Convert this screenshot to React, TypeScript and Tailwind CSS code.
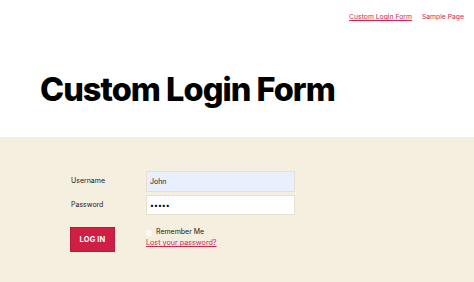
import React from 'react';

const App: React.FC = () => {
    return (
        <div className="w-[474px] h-[282px] overflow-hidden bg-white flex flex-col" style={{ fontFamily: 'Inter, "Liberation Sans", sans-serif' }}>
            <header className="h-[137px] flex flex-col">
                <nav className="flex justify-end gap-[10px] pr-[10px] pt-[12px] text-[6.8px] leading-[9px] text-[#cd2653]">
                    <a href="#" className="underline underline-offset-[1px]">Custom Login Form</a>
                    <a href="#">Sample Page</a>
                </nav>
                <h1 className="mt-[50px] pl-[40px] text-[32.5px] leading-[38px] font-extrabold tracking-[-0.03em] text-black">
                    Custom Login Form
                </h1>
            </header>

            <main className="flex-1 bg-[#f5efe0] pt-[34px] pl-[70px]">
                <form className="flex flex-col">
                    <div className="flex items-center h-[21px]">
                        <label className="w-[76px] pl-[1px] text-[7px] text-[#1a1a1a]">Username</label>
                        <input
                            type="text"
                            defaultValue="John"
                            className="w-[149px] h-[21px] bg-[#e8f0fe] border border-[#e6e0d2] px-[3px] text-[7px] text-[#1a1a1a] outline-none"
                        />
                    </div>
                    <div className="flex items-center h-[20px] mt-[3px]">
                        <label className="w-[76px] pl-[1px] text-[7px] text-[#1a1a1a]">Password</label>
                        <input
                            type="password"
                            defaultValue="admin"
                            className="w-[149px] h-[20px] bg-white border border-[#e6e0d2] px-[3px] text-[7px] text-black outline-none"
                        />
                    </div>
                    <div className="flex items-start mt-[12px]">
                        <button
                            type="button"
                            className="w-[45px] h-[25px] bg-[#d01f45] border border-[#b81a3c] text-white text-[7.5px] font-bold tracking-[0.02em]"
                        >
                            LOG IN
                        </button>
                        <div className="ml-[31px] flex flex-col">
                            <label className="flex items-center gap-[4px] h-[9px] mt-[1px] text-[7px] text-[#1a1a1a]">
                                <span className="w-[6px] h-[6px] rounded-[1px] bg-[#fbf9f4] inline-block" />
                                Remember Me
                            </label>
                            <a href="#" className="mt-[1px] text-[7.2px] leading-[10px] text-[#cd2653] underline">
                                Lost your password?
                            </a>
                        </div>
                    </div>
                </form>
            </main>
        </div>
    );
};

export default App;
